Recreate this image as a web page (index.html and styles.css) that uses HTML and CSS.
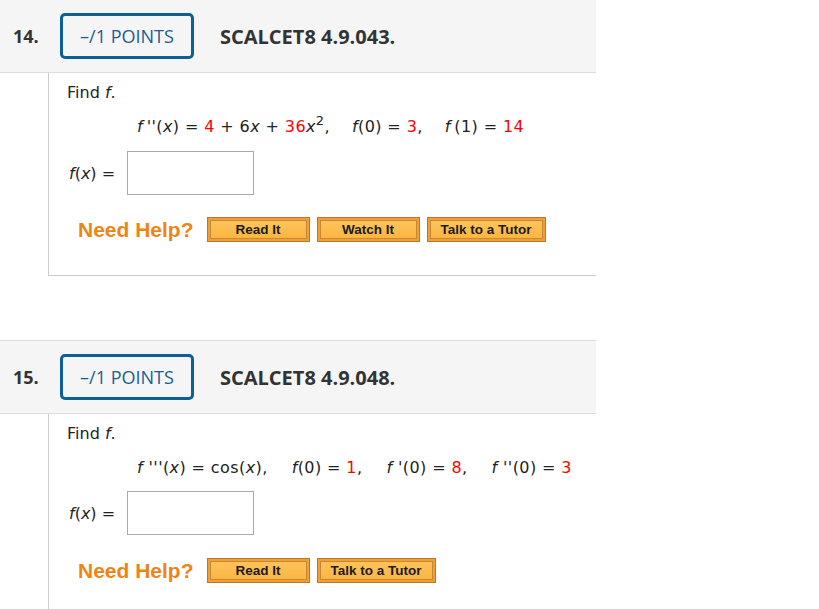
FILE: index.html
```html
<!DOCTYPE html>
<html>
<head>
<meta charset="utf-8">
<link rel="stylesheet" href="styles.css">
</head>
<body>
<div class="page">
  <div class="question">
    <div class="qhead">
      <div class="qnum">14.</div>
      <div class="points">&ndash;/1 POINTS</div>
      <div class="qid">SCALCET8 4.9.043.</div>
    </div>
    <div class="qbody">
      <div class="find">Find <i>f</i>.</div>
      <div class="eq"><i>f</i>&thinsp;''(<i>x</i>) = <span class="red">4</span> + 6<i>x</i> + <span class="red">36</span><i>x</i><sup>2</sup>,&nbsp;&nbsp;&nbsp;&nbsp;<i>f</i>(0) = <span class="red">3</span>,&nbsp;&nbsp;&nbsp;&nbsp;<i>f</i>&thinsp;(1) = <span class="red">14</span></div>
      <div class="answer"><span class="lbl"><i>f</i>(<i>x</i>) = </span><span class="box"></span></div>
      <div class="help">
        <span class="need">Need Help?</span>
        <span class="btn w103"><span>Read It</span></span>
        <span class="btn w103"><span>Watch It</span></span>
        <span class="btn w119"><span>Talk to a Tutor</span></span>
      </div>
    </div>
  </div>
  <div class="question">
    <div class="qhead">
      <div class="qnum">15.</div>
      <div class="points">&ndash;/1 POINTS</div>
      <div class="qid">SCALCET8 4.9.048.</div>
    </div>
    <div class="qbody">
      <div class="find">Find <i>f</i>.</div>
      <div class="eq"><i>f</i> '''(<i>x</i>) = cos(<i>x</i>),<span class="gap"></span><i>f</i>(0) = <span class="red">1</span>,<span class="gap"></span><i>f</i> '(0) = <span class="red">8</span>,<span class="gap"></span><i>f</i> ''(0) = <span class="red">3</span></div>
      <div class="answer q15"><span class="lbl"><i>f</i>(<i>x</i>) = </span><span class="box"></span></div>
      <div class="help">
        <span class="need">Need Help?</span>
        <span class="btn w103"><span>Read It</span></span>
        <span class="btn w119"><span>Talk to a Tutor</span></span>
      </div>
    </div>
  </div>
</div>
</body>
</html>
```
FILE: styles.css
```css
html, body { margin: 0; padding: 0; background: #fff; }
.page { width: 596px; }
.question { margin-bottom: 64px; }
.qhead {
  height: 72px;
  background: #f5f5f5;
  border-top: 1px solid #dcdcdc;
  border-bottom: 1px solid #dcdcdc;
  display: flex;
  align-items: center;
  font-family: "Open Sans", sans-serif;
}
.question:first-child .qhead { border-top: none; }
.qnum {
  width: 47px;
  padding-left: 13px;
  font-weight: bold;
  font-size: 18px;
  color: #333;
}
.points {
  box-sizing: border-box;
  width: 134px;
  height: 46px;
  border: 3px solid #0d5f98;
  border-radius: 5px;
  color: #1a5d92;
  font-size: 18px;
  display: flex;
  align-items: center;
  justify-content: center;
}
.qid {
  margin-left: 26px;
  font-weight: bold;
  font-size: 20px;
  color: #333;
}
.qbody {
  margin-left: 48px;
  border-left: 1px solid #ccc;
  border-bottom: 1px solid #ccc;
  padding: 10px 0 33px 18px;
  font-family: "DejaVu Sans", Verdana, sans-serif;
  font-size: 16px;
  color: #222;
}
.find { line-height: 20px; }
.eq { margin-top: 14px; margin-left: 70px; line-height: 20px; letter-spacing: 0.4px; }
.eq sup { font-size: 13px; line-height: 0; vertical-align: 7px; }
.gap { display: inline-block; width: 24px; }
.red { color: #f00; }
.answer { margin-top: 14px; display: flex; align-items: center; }
.answer.q15 { margin-top: 13px; }
.answer.q15 + .help { margin-top: 23px; }
.lbl { width: 60px; padding-left: 2px; box-sizing: border-box; }
.box {
  box-sizing: border-box;
  width: 127px;
  height: 44px;
  border: 1px solid #a9a9a9;
  background: #fff;
}
.help { margin-top: 22px; display: flex; align-items: center; padding-left: 11px; }
.need {
  font-family: "Liberation Sans", Arial, sans-serif;
  font-weight: bold;
  font-size: 21px;
  color: #ef8416;
  margin-right: 13px;
}
.btn {
  box-sizing: border-box;
  height: 25px;
  border: 1px solid #b9762c;
  background: #f59d30;
  padding: 2px;
  margin-right: 7px;
}
.btn > span {
  display: block;
  height: 17px;
  line-height: 17px;
  border: 1px solid #c4883a;
  background: linear-gradient(#fdc45c, #fbb641);
  text-align: center;
  font-family: "Liberation Sans", Arial, sans-serif;
  font-weight: bold;
  font-size: 13.5px;
  color: #1b1b1b;
}
.w103 { width: 103px; }
.w119 { width: 119px; }
```
